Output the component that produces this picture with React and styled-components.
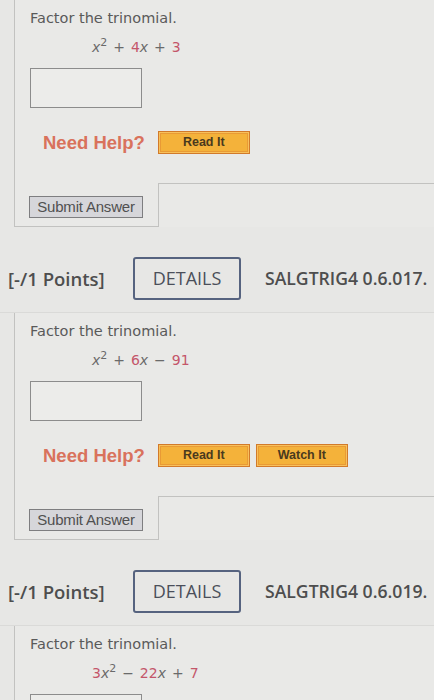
import React from 'react';
import styled, { createGlobalStyle } from 'styled-components';

const Global = createGlobalStyle`
  html, body { margin: 0; padding: 0; background: #e7e7e5; }
  body { width: 434px; height: 700px; overflow: hidden; }
`;

const Page = styled.div`
  display: flex;
  flex-direction: column;
`;

const Panel = styled.section`
  margin-left: 14px;
  border-left: 1px solid #c2c2c0;
  display: flex;
  flex-direction: column;
  background: #e9e9e7;
`;

const Body = styled.div`
  padding: 9px 0 0 15px;
  display: flex;
  flex-direction: column;
  align-items: flex-start;
`;

const Prompt = styled.div`
  font: 14.5px/18px "DejaVu Sans", Verdana, sans-serif;
  color: #5a5a5a;
`;

const Equation = styled.div`
  margin: 11px 0 0 62px;
  font: 14px/18px "DejaVu Sans", Verdana, sans-serif;
  color: #6a6a6a;
  white-space: pre;
  word-spacing: 1.5px;
  i { font-style: italic; }
  sup { font-size: 11px; line-height: 0; vertical-align: 6px; }
`;

const Coef = styled.span`
  color: #c4566a;
`;

const AnswerBox = styled.div`
  margin-top: 12px;
  width: 110px;
  height: 38px;
  border: 1px solid #8c8c8c;
  background: #ececea;
`;

const HelpRow = styled.div`
  margin: 23px 0 0 13px;
  display: flex;
  align-items: center;
`;

const NeedHelp = styled.span`
  font: bold 18.5px/23px "Liberation Sans", Arial, sans-serif;
  color: #d9725c;
  margin-right: 13px;
`;

const HelpButton = styled.button`
  width: 92px;
  height: 23px;
  margin-right: 6px;
  padding: 0;
  border: 1px solid #d27a2a;
  box-shadow: inset 0 0 0 1px #f7c15c, inset 0 0 0 2px #e99a35;
  background: #f4b23a;
  font: bold 12.5px/21px "Liberation Sans", Arial, sans-serif;
  color: #4a3a1e;
  cursor: pointer;
`;

const Footer = styled.div`
  margin-top: 29px;
  display: flex;
`;

const SubmitTab = styled.div`
  width: 144px;
  padding: 13px 0 8px 14px;
  box-sizing: border-box;
  border-right: 1px solid #c2c2c0;
  border-bottom: 1px solid #c2c2c0;
`;

const Filler = styled.div`
  flex: 1;
  border-top: 1px solid #c2c2c0;
`;

const SubmitButton = styled.button`
  width: 114px;
  height: 22px;
  padding: 0;
  border: 1px solid #7e7e80;
  background: #d6d6da;
  font: 15px/20px "Liberation Sans", Arial, sans-serif;
  color: #505050;
  letter-spacing: -0.2px;
`;

const Header = styled.div`
  height: 86px;
  box-sizing: border-box;
  padding: 30px 0 0 8px;
  display: flex;
  align-items: flex-start;
  border-bottom: 1px solid #dadad8;
`;

const Points = styled.span`
  width: 125px;
  font: 600 18.5px/43px "Open Sans", sans-serif;
  color: #4e4e4e;
  white-space: nowrap;
`;

const Details = styled.button`
  width: 108px;
  height: 43px;
  margin-right: 24px;
  padding: 0;
  border: 2px solid #56637f;
  border-radius: 3px;
  background: transparent;
  font: 18px/39px "Open Sans", sans-serif;
  color: #4b4f5a;
`;

const Code = styled.span`
  font: 600 17.6px/43px "Open Sans", sans-serif;
  color: #4e4e4e;
  white-space: nowrap;
`;

const questions = [
  {
    eq: (
      <>
        <i>x</i><sup>2</sup> + <Coef>4</Coef><i>x</i> + <Coef>3</Coef>
      </>
    ),
    help: ['Read It'],
  },
  {
    eq: (
      <>
        <i>x</i><sup>2</sup> + <Coef>6</Coef><i>x</i> − <Coef>91</Coef>
      </>
    ),
    help: ['Read It', 'Watch It'],
    header: 'SALGTRIG4 0.6.017.',
  },
  {
    eq: (
      <>
        <Coef>3</Coef><i>x</i><sup>2</sup> − <Coef>22</Coef><i>x</i> + <Coef>7</Coef>
      </>
    ),
    help: [],
    header: 'SALGTRIG4 0.6.019.',
    partial: true,
  },
];

function Question({ q }) {
  return (
    <Panel>
      <Body>
        <Prompt>Factor the trinomial.</Prompt>
        <Equation>{q.eq}</Equation>
        <AnswerBox />
        {!q.partial && (
          <HelpRow>
            <NeedHelp>Need Help?</NeedHelp>
            {q.help.map((h) => (
              <HelpButton key={h}>{h}</HelpButton>
            ))}
          </HelpRow>
        )}
      </Body>
      {!q.partial && (
        <Footer>
          <SubmitTab>
            <SubmitButton>Submit Answer</SubmitButton>
          </SubmitTab>
          <Filler />
        </Footer>
      )}
    </Panel>
  );
}

export default function App() {
  return (
    <Page>
      <Global />
      {questions.map((q, i) => (
        <React.Fragment key={i}>
          {q.header && (
            <Header>
              <Points>[-/1 Points]</Points>
              <Details>DETAILS</Details>
              <Code>{q.header}</Code>
            </Header>
          )}
          <Question q={q} />
        </React.Fragment>
      ))}
    </Page>
  );
}
